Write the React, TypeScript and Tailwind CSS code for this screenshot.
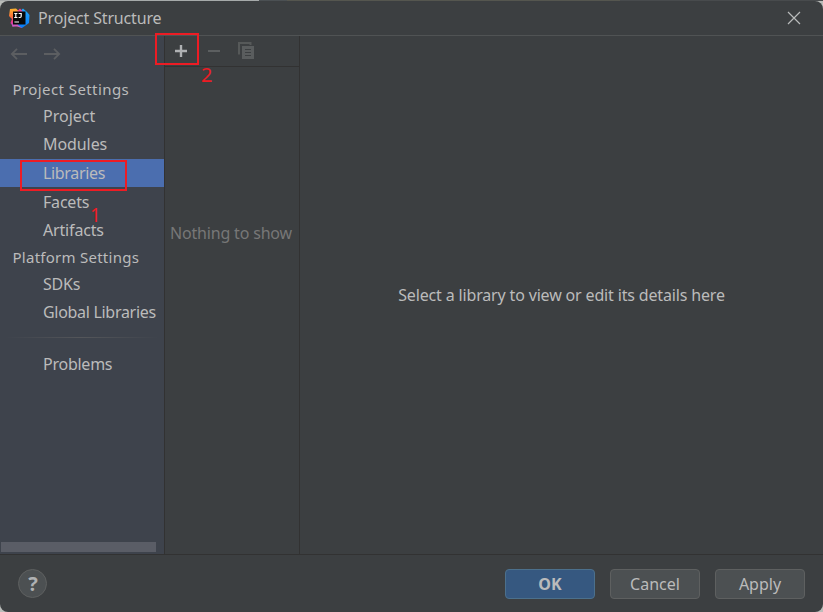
import React from "react";

function Logo() {
  return (
    <svg width="21" height="20" viewBox="0 0 21 20" className="block">
      <defs>
        <linearGradient id="warm" x1="0" y1="0" x2="0" y2="1">
          <stop offset="0" stopColor="#fcb52e" />
          <stop offset="0.45" stopColor="#f8713a" />
          <stop offset="0.75" stopColor="#e8308f" />
          <stop offset="1" stopColor="#9a55c8" />
        </linearGradient>
        <linearGradient id="cool" x1="0" y1="0" x2="0" y2="1">
          <stop offset="0" stopColor="#22a5f7" />
          <stop offset="1" stopColor="#087cfa" />
        </linearGradient>
      </defs>
      <path d="M1 1 L7 0.5 L11 4 L10 17 L4 18.5 L1.5 15 L3 11 L0 8 Z" fill="url(#warm)" />
      <path d="M4 14 L12 15 L13 20 L8 18.5 L3 18.5 Z" fill="#d05ac0" />
      <path d="M10 4 L14 0.5 L18 4 L20.5 7 L20 15 L13 20 L9 17 Z" fill="url(#cool)" />
      <path d="M8 3.5 L11 0.5 L14 4 Z" fill="#f0439a" />
      <rect x="4" y="3.5" width="12.5" height="13" fill="#080808" />
      <path d="M5.2 5.5h3.2M6.8 5.5v4M5.2 9.5h3.2M9.6 5.5h2.6v2.8q0 1.2-1.2 1.2h-1.4" stroke="#fff" strokeWidth="1.2" fill="none" />
      <path d="M5.4 14h4.6" stroke="#fff" strokeWidth="1.1" />
    </svg>
  );
}

function Arrow({ flip = false }: { flip?: boolean }) {
  return (
    <svg width="18" height="14" viewBox="0 0 18 14" className={flip ? "block -scale-x-100" : "block"}>
      <path d="M17 7H2M7 1.8L1.8 7L7 12.2" fill="none" stroke="#5c5e61" strokeWidth="1.8" />
    </svg>
  );
}

function Heading({ children, className }: { children: string; className: string }) {
  return <div className={`flex items-center whitespace-nowrap pl-[12.5px] text-[15px] ${className}`}>{children}</div>;
}

function Item({ children, className }: { children: string; className: string }) {
  return <div className={`flex items-center whitespace-nowrap pl-[43px] ${className}`}>{children}</div>;
}

function Button({ children, primary = false }: { children: string; primary?: boolean }) {
  return (
    <button
      className={`flex h-[30px] w-[90px] items-center justify-center rounded-[4px] border pt-px ${
        primary ? "border-[#4c708c] bg-[#365880] font-bold" : "border-[#5e6060] bg-[#4c5052]"
      }`}
    >
      {children}
    </button>
  );
}

export default function App() {
  return (
    <div className="relative h-[612px] w-[823px] overflow-hidden bg-[#babdba] font-['Noto_Sans','Open_Sans',sans-serif] text-[16px] leading-none text-[#bbbbbb]">
      <div className="flex h-px">
        <div className="w-[259px] bg-[#a6aaaa]" />
        <div className="w-[28px] bg-[#4b5053]" />
        <div className="w-[333px] bg-[#55564f]" />
        <div className="grow bg-[#484b4d]" />
      </div>
      <div className="flex h-[611px] flex-col overflow-hidden rounded-[8px] bg-[#3c3f41]">
        <header className="flex h-[35px] shrink-0 items-center border-b border-[#505354] pl-[9px] pr-[22px]">
          <Logo />
          <h1 className="ml-[8px] grow text-[16px] tracking-[-0.16px]">Project Structure</h1>
          <svg width="14" height="14" viewBox="0 0 14 14">
            <path d="M1 1L13 13M13 1L1 13" stroke="#b9bbbb" strokeWidth="1.2" />
          </svg>
        </header>
        <div className="flex h-[518px] shrink-0">
          <aside className="flex w-[164px] flex-col bg-[#3e434c]">
            <div className="flex h-[42px] items-center gap-[15px] pb-[6px] pl-[10px]">
              <Arrow />
              <Arrow flip />
            </div>
            <Heading className="h-[24px] pb-[2px] tracking-[0.42px]">Project Settings</Heading>
            <Item className="h-[28px] pb-px">Project</Item>
            <Item className="h-[29px] pb-[2px] tracking-[-0.08px]">Modules</Item>
            <Item className="h-[28px] bg-[#4b6eaf] tracking-[-0.33px]">Libraries</Item>
            <Item className="h-[29px] tracking-[-0.2px]">Facets</Item>
            <Item className="h-[29px] pb-[2px] tracking-[-0.17px]">Artifacts</Item>
            <Heading className="h-[25px] tracking-[0.26px]">Platform Settings</Heading>
            <Item className="h-[28px] pb-px tracking-[-0.2px]">SDKs</Item>
            <Item className="h-[29px] pb-[2px] tracking-[-0.3px]">Global Libraries</Item>
            <div className="mx-[5px] mt-[10px] h-px bg-linear-to-r from-transparent via-[#54565a] to-transparent" />
            <Item className="mt-[12px] h-[29px] pb-[2px] tracking-[-0.25px]">Problems</Item>
            <div className="mb-[2px] ml-px mt-auto h-[10px] w-[155px] bg-[#5a5d66]" />
          </aside>
          <section className="flex w-[136px] flex-col border-x border-[#323232]">
            <div className="flex h-[31px] items-center border-b border-[#323232] pl-[9px]">
              <svg width="14" height="14" viewBox="0 0 14 14">
                <path d="M7 1v12M1 7h12" stroke="#afb1b3" strokeWidth="2.4" />
              </svg>
              <svg width="14" height="14" viewBox="0 0 14 14" className="ml-[19px]">
                <path d="M1 7h12" stroke="#5c5f60" strokeWidth="2.2" />
              </svg>
              <svg width="17" height="17" viewBox="0 0 17 17" className="mb-[2px] ml-[17px]">
                <path d="M1 12.5V1H12.5V3" fill="none" stroke="#565959" strokeWidth="2" />
                <path d="M4 4H16V17H4Z" fill="#5a5d5e" />
                <path d="M7 7.5h6M7 10.5h6M7 13.5h6" stroke="#3c3f41" strokeWidth="1" />
              </svg>
            </div>
            <div className="mt-[154px] whitespace-nowrap pl-[5px] leading-[24px] tracking-[-0.18px] text-[#777777]">Nothing to show</div>
          </section>
          <main className="flex grow items-center justify-center">
            <span className="whitespace-nowrap tracking-[-0.16px]">Select a library to view or edit its details here</span>
          </main>
        </div>
        <footer className="flex grow items-center border-t border-[#323232] pl-[18px] pr-[18px]">
          <button className="flex h-[29px] w-[29px] items-center justify-center rounded-full border border-[#5e6060] bg-[#4c5052] pl-px pt-px text-[20px] font-bold text-[#afb1b3]">?</button>
          <div className="ml-auto flex gap-[15px]">
            <Button primary>OK</Button>
            <Button>Cancel</Button>
            <Button>Apply</Button>
          </div>
        </footer>
      </div>
      <div className="absolute left-[155px] top-[33px] h-[32px] w-[44px] border-2 border-[#ed1c24]" />
      <div className="absolute left-[20px] top-[160px] h-[31px] w-[107px] border-2 border-[#ed1c24]" />
      <span className="absolute left-[201px] top-[65px] text-[20px] text-[#ed1c24]">2</span>
      <span className="absolute left-[90px] top-[208px] text-[19px] leading-[14px] text-[#ed1c24]">1</span>
    </div>
  );
}
